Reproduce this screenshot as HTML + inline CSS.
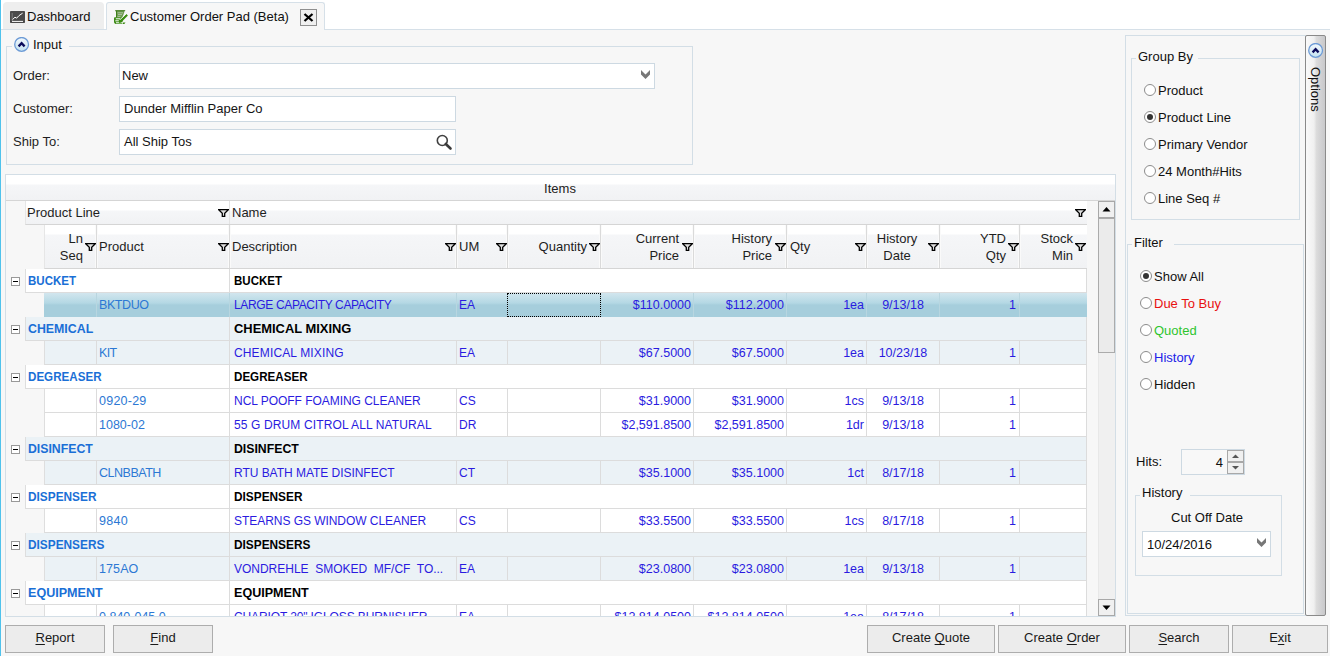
<!DOCTYPE html><html><head><meta charset="utf-8"><style>
*{margin:0;padding:0;box-sizing:border-box}
html,body{width:1330px;height:656px;overflow:hidden;background:#f7f7f7;font-family:"Liberation Sans",sans-serif;font-size:13px;color:#1e1e1e}
.abs{position:absolute}
.t{position:absolute;white-space:nowrap;line-height:15px}
.box{position:absolute;border:1px solid #d3dee6}
.btn{position:absolute;border:1px solid #adadad;background:#ececec;text-align:center;line-height:24px;font-size:13px;color:#1a1a1a}
.btn u{text-decoration:underline;text-underline-offset:2px}
.hdr{position:absolute;background:linear-gradient(#ffffff 0,#ffffff 9px,#f5f6f8 10px,#f1f2f4 100%)}
.vl{position:absolute;width:1px}
.hl{position:absolute;height:1px}
.radio{position:absolute;width:12px;height:12px;border-radius:50%;border:1px solid #8c8c8c;background:#fff}
.radio.on::after{content:"";position:absolute;left:2px;top:2px;width:6px;height:6px;border-radius:50%;background:#333}
.g{font-size:12px;letter-spacing:-0.3px}
</style></head><body>

<div class="abs" style="left:0px;top:0px;width:1330px;height:29px;background:#fff"></div>
<div class="abs" style="left:0px;top:29px;width:1330px;height:1px;background:#d6e0e8"></div>
<div class="abs" style="left:3px;top:2px;width:101px;height:27px;background:#eeeeee;border-radius:4px 4px 0 0"></div>
<svg class="abs" style="left:10px;top:11px" width="15" height="12" viewBox="0 0 15 12">
<rect x="0" y="0" width="15" height="12" rx="0.8" fill="#4a4a4a"/>
<path d="M2.2 2v8" stroke="#8a8a8a" stroke-width="0.8"/>
<polyline points="2.5,8.6 5,6.2 6.6,7.2 9,4.6 12.6,2.2" stroke="#fff" stroke-width="1" fill="none"/>
<line x1="2" y1="10.4" x2="13" y2="10.4" stroke="#fff" stroke-width="1"/></svg>
<div class="t" style="left:27px;top:9px;color:#101010">Dashboard</div>
<div class="abs" style="left:106px;top:2px;width:219px;height:28px;background:#f7f7f7;border:1px solid #d6e0e8;border-bottom:none;border-radius:3px 3px 0 0"></div>
<svg class="abs" style="left:112px;top:8px" width="18" height="18" viewBox="0 0 18 18">
<path d="M3 2h10.5L12 4H4z" fill="#578a38"/>
<path d="M4 3.5h8.5l-2 6H4.3z" fill="#6e9a52"/>
<path d="M5.5 4.8h5.5M6 6.6h4M5.5 8.4h3" stroke="#b4c8a6" stroke-width="0.9"/>
<path d="M4.5 3v6.5" stroke="#3f7f1a" stroke-width="1"/>
<path d="M3.2 9.3h7.3v6.7H4c-1.3 0-2-1-2-2.2v-3.2c0-.8.5-1.3 1.2-1.3z" fill="#3c8a14"/>
<path d="M3.8 10.8h4.5M3.3 12.8h3.5M4 14.8h7.5" stroke="#ffffff" stroke-width="1"/>
<path d="M11 14.5h2.5l-1.2 1.5H11z" fill="#3c8a14"/>
<path d="M7.5 12.8L14.3 6l1.6 1.6-6.8 6.8-2.2.6z" fill="#3a8c10"/>
<path d="M8 11.8l6-6" stroke="#ffffff" stroke-width="0.9"/>
</svg>
<div class="t" style="left:130px;top:9px;color:#101010">Customer Order Pad (Beta)</div>
<div class="abs" style="left:300px;top:9px;width:17px;height:17px;background:#f0f0f0;border:1px solid #8f8f8f"></div>
<svg class="abs" style="left:303px;top:13px" width="11" height="9" viewBox="0 0 11 9"><path d="M1.5 1L9.5 8M9.5 1L1.5 8" stroke="#000" stroke-width="2.3"/></svg>
<div class="abs" style="left:0px;top:0px;width:1px;height:656px;background:#4fc2ec"></div>
<div class="abs" style="left:6px;top:46px;width:687px;height:119px;border:1px solid #d3dee6"></div>
<div class="abs" style="left:12px;top:38px;width:57px;height:14px;background:#f7f7f7"></div>
<svg class="abs" style="left:14px;top:37px" width="16" height="16" viewBox="0 0 16 16">
<defs><linearGradient id="eg1" x1="0" y1="0" x2="0" y2="1"><stop offset="0" stop-color="#f4fafd"/><stop offset="0.5" stop-color="#dcecf6"/><stop offset="1" stop-color="#c4e4f2"/></linearGradient></defs>
<circle cx="7.6" cy="7.4" r="6.9" fill="url(#eg1)" stroke="#6d9bd6" stroke-width="1.3"/>
<path d="M4.6 9.4L7.6 6.2l3 3.2" stroke="#0a0a5a" stroke-width="2.3" fill="none"/></svg>
<div class="t" style="left:33px;top:37px;color:#101010">Input</div>
<div class="t" style="left:13px;top:68px;">Order:</div>
<div class="t" style="left:13px;top:101px;">Customer:</div>
<div class="t" style="left:13px;top:134px;">Ship To:</div>
<div class="abs" style="left:119px;top:63px;width:536px;height:26px;background:#fff;border:1px solid #cdd9e2"></div>
<div class="t" style="left:122px;top:68px;color:#141414">New</div>
<svg class="abs" style="left:641px;top:70px" width="9" height="9" viewBox="0 0 9 9"><path d="M0 0L4.5 4.4L9 0V4.5L4.5 9L0 4.5Z" fill="#777777"/></svg>
<div class="abs" style="left:119px;top:96px;width:337px;height:26px;background:#fff;border:1px solid #cdd9e2"></div>
<div class="t" style="left:124px;top:101px;color:#141414">Dunder Mifflin Paper Co</div>
<div class="abs" style="left:119px;top:129px;width:337px;height:26px;background:#fff;border:1px solid #cdd9e2"></div>
<div class="t" style="left:124px;top:134px;color:#141414">All Ship Tos</div>
<svg class="abs" style="left:435px;top:133px" width="18" height="18" viewBox="0 0 18 18"><circle cx="7.3" cy="7.5" r="5" stroke="#404040" stroke-width="1.6" fill="none"/><path d="M10.8 11L15.5 15.5" stroke="#3a3a3a" stroke-width="2.6" stroke-linecap="round"/></svg>
<div class="abs" style="left:5px;top:174px;width:1111px;height:443px;border:1px solid #d3dee6;background:#f7f7f7"></div>
<div class="hdr" style="left:6px;top:175px;width:1109px;height:26px;border-bottom:1px solid #d5d5d5"></div>
<div class="t" style="left:410px;top:181px;width:300px;text-align:center;color:#222">Items</div>
<div class="hdr" style="left:25px;top:201px;width:1062px;height:24px;border-bottom:1px solid #d5d5d5;border-left:1px solid #e6e6e6"></div>
<div class="abs" style="left:229px;top:201px;width:1px;height:23px;background:#e3e3e3"></div>
<div class="t" style="left:27px;top:205px;">Product Line</div>
<svg class="abs" style="left:218px;top:209px" width="11" height="8" viewBox="0 0 11 8"><path d="M0.7 0.7H10.3L6.7 4.3V7.3H4.3V4.3Z" fill="#dedede" stroke="#000" stroke-width="1.3" stroke-linejoin="miter"/></svg>
<div class="t" style="left:232px;top:205px;">Name</div>
<svg class="abs" style="left:1075px;top:209px" width="11" height="8" viewBox="0 0 11 8"><path d="M0.7 0.7H10.3L6.7 4.3V7.3H4.3V4.3Z" fill="#dedede" stroke="#000" stroke-width="1.3" stroke-linejoin="miter"/></svg>
<div class="hdr" style="left:44px;top:225px;width:1043px;height:44px;border-bottom:1px solid #d5d5d5;border-left:1px solid #e6e6e6;background:linear-gradient(#fff 0,#fff 9px,#f5f6f8 10px,#f1f2f4 100%)"></div>
<div class="abs" style="left:95px;top:225px;width:1px;height:43px;background:#fafafa"></div>
<div class="abs" style="left:96px;top:225px;width:1px;height:43px;background:#dadada"></div>
<div class="abs" style="left:97px;top:225px;width:1px;height:43px;background:#fafafa"></div>
<div class="abs" style="left:228px;top:225px;width:1px;height:43px;background:#fafafa"></div>
<div class="abs" style="left:229px;top:225px;width:1px;height:43px;background:#dadada"></div>
<div class="abs" style="left:230px;top:225px;width:1px;height:43px;background:#fafafa"></div>
<div class="abs" style="left:455px;top:225px;width:1px;height:43px;background:#fafafa"></div>
<div class="abs" style="left:456px;top:225px;width:1px;height:43px;background:#dadada"></div>
<div class="abs" style="left:457px;top:225px;width:1px;height:43px;background:#fafafa"></div>
<div class="abs" style="left:506px;top:225px;width:1px;height:43px;background:#fafafa"></div>
<div class="abs" style="left:507px;top:225px;width:1px;height:43px;background:#dadada"></div>
<div class="abs" style="left:508px;top:225px;width:1px;height:43px;background:#fafafa"></div>
<div class="abs" style="left:599px;top:225px;width:1px;height:43px;background:#fafafa"></div>
<div class="abs" style="left:600px;top:225px;width:1px;height:43px;background:#dadada"></div>
<div class="abs" style="left:601px;top:225px;width:1px;height:43px;background:#fafafa"></div>
<div class="abs" style="left:692px;top:225px;width:1px;height:43px;background:#fafafa"></div>
<div class="abs" style="left:693px;top:225px;width:1px;height:43px;background:#dadada"></div>
<div class="abs" style="left:694px;top:225px;width:1px;height:43px;background:#fafafa"></div>
<div class="abs" style="left:785px;top:225px;width:1px;height:43px;background:#fafafa"></div>
<div class="abs" style="left:786px;top:225px;width:1px;height:43px;background:#dadada"></div>
<div class="abs" style="left:787px;top:225px;width:1px;height:43px;background:#fafafa"></div>
<div class="abs" style="left:865px;top:225px;width:1px;height:43px;background:#fafafa"></div>
<div class="abs" style="left:866px;top:225px;width:1px;height:43px;background:#dadada"></div>
<div class="abs" style="left:867px;top:225px;width:1px;height:43px;background:#fafafa"></div>
<div class="abs" style="left:938px;top:225px;width:1px;height:43px;background:#fafafa"></div>
<div class="abs" style="left:939px;top:225px;width:1px;height:43px;background:#dadada"></div>
<div class="abs" style="left:940px;top:225px;width:1px;height:43px;background:#fafafa"></div>
<div class="abs" style="left:1018px;top:225px;width:1px;height:43px;background:#fafafa"></div>
<div class="abs" style="left:1019px;top:225px;width:1px;height:43px;background:#dadada"></div>
<div class="abs" style="left:1020px;top:225px;width:1px;height:43px;background:#fafafa"></div>
<div class="t" style="left:-117px;top:230px;width:200px;text-align:right;line-height:17px">Ln<br>Seq</div>
<svg class="abs" style="left:85px;top:243px" width="11" height="8" viewBox="0 0 11 8"><path d="M0.7 0.7H10.3L6.7 4.3V7.3H4.3V4.3Z" fill="#dedede" stroke="#000" stroke-width="1.3" stroke-linejoin="miter"/></svg>
<div class="t" style="left:99px;top:239px;">Product</div>
<svg class="abs" style="left:218px;top:243px" width="11" height="8" viewBox="0 0 11 8"><path d="M0.7 0.7H10.3L6.7 4.3V7.3H4.3V4.3Z" fill="#dedede" stroke="#000" stroke-width="1.3" stroke-linejoin="miter"/></svg>
<div class="t" style="left:232px;top:239px;">Description</div>
<svg class="abs" style="left:445px;top:243px" width="11" height="8" viewBox="0 0 11 8"><path d="M0.7 0.7H10.3L6.7 4.3V7.3H4.3V4.3Z" fill="#dedede" stroke="#000" stroke-width="1.3" stroke-linejoin="miter"/></svg>
<div class="t" style="left:459px;top:239px;">UM</div>
<svg class="abs" style="left:496px;top:243px" width="11" height="8" viewBox="0 0 11 8"><path d="M0.7 0.7H10.3L6.7 4.3V7.3H4.3V4.3Z" fill="#dedede" stroke="#000" stroke-width="1.3" stroke-linejoin="miter"/></svg>
<div class="t" style="left:287px;top:239px;width:300px;text-align:right;">Quantity</div>
<svg class="abs" style="left:589px;top:243px" width="11" height="8" viewBox="0 0 11 8"><path d="M0.7 0.7H10.3L6.7 4.3V7.3H4.3V4.3Z" fill="#dedede" stroke="#000" stroke-width="1.3" stroke-linejoin="miter"/></svg>
<div class="t" style="left:479px;top:230px;width:200px;text-align:right;line-height:17px">Current<br>Price</div>
<svg class="abs" style="left:682px;top:243px" width="11" height="8" viewBox="0 0 11 8"><path d="M0.7 0.7H10.3L6.7 4.3V7.3H4.3V4.3Z" fill="#dedede" stroke="#000" stroke-width="1.3" stroke-linejoin="miter"/></svg>
<div class="t" style="left:572px;top:230px;width:200px;text-align:right;line-height:17px">History<br>Price</div>
<svg class="abs" style="left:775px;top:243px" width="11" height="8" viewBox="0 0 11 8"><path d="M0.7 0.7H10.3L6.7 4.3V7.3H4.3V4.3Z" fill="#dedede" stroke="#000" stroke-width="1.3" stroke-linejoin="miter"/></svg>
<div class="t" style="left:790px;top:239px;">Qty</div>
<svg class="abs" style="left:855px;top:243px" width="11" height="8" viewBox="0 0 11 8"><path d="M0.7 0.7H10.3L6.7 4.3V7.3H4.3V4.3Z" fill="#dedede" stroke="#000" stroke-width="1.3" stroke-linejoin="miter"/></svg>
<div class="t" style="left:797px;top:230px;width:200px;text-align:center;line-height:17px">History<br>Date</div>
<svg class="abs" style="left:928px;top:243px" width="11" height="8" viewBox="0 0 11 8"><path d="M0.7 0.7H10.3L6.7 4.3V7.3H4.3V4.3Z" fill="#dedede" stroke="#000" stroke-width="1.3" stroke-linejoin="miter"/></svg>
<div class="t" style="left:806px;top:230px;width:200px;text-align:right;line-height:17px">YTD<br>Qty</div>
<svg class="abs" style="left:1008px;top:243px" width="11" height="8" viewBox="0 0 11 8"><path d="M0.7 0.7H10.3L6.7 4.3V7.3H4.3V4.3Z" fill="#dedede" stroke="#000" stroke-width="1.3" stroke-linejoin="miter"/></svg>
<div class="t" style="left:873px;top:230px;width:200px;text-align:right;line-height:17px">Stock<br>Min</div>
<svg class="abs" style="left:1075px;top:243px" width="11" height="8" viewBox="0 0 11 8"><path d="M0.7 0.7H10.3L6.7 4.3V7.3H4.3V4.3Z" fill="#dedede" stroke="#000" stroke-width="1.3" stroke-linejoin="miter"/></svg>
<div class="abs" style="left:1098px;top:201px;width:17px;height:415px;background:#f0f0f0;border-left:1px solid #e8e8e8"></div>
<div class="abs" style="left:1098px;top:201px;width:17px;height:17px;background:#f0f0f0;border:1px solid #a8a8a8"></div>
<svg class="abs" style="left:1102px;top:206px" width="9" height="6" viewBox="0 0 9 6"><path d="M0.5 5.5L4.5 1l4 4.5z" fill="#000"/></svg>
<div class="abs" style="left:1098px;top:218px;width:17px;height:135px;background:#ebebeb;border:1px solid #ababab"></div>
<div class="abs" style="left:1098px;top:599px;width:17px;height:17px;background:#f0f0f0;border:1px solid #a8a8a8"></div>
<svg class="abs" style="left:1102px;top:605px" width="9" height="6" viewBox="0 0 9 6"><path d="M0.5 0.5L4.5 5l4-4.5z" fill="#000"/></svg>
<div class="abs" style="left:6px;top:269px;width:1092px;height:347px;overflow:hidden">
<div class="abs" style="left:19px;top:0px;width:1062px;height:24px;background:#ffffff;border-left:1px solid #dedede;border-bottom:1px solid #dcdcdc;border-right:1px solid #dcdcdc"></div>
<div class="abs" style="left:223px;top:0px;width:1px;height:23px;background:#dcdcdc"></div>
<div class="abs" style="left:5px;top:8px;width:9px;height:9px;background:#fff;border:1px solid #999"></div>
<div class="abs" style="left:7px;top:12px;width:5px;height:1px;background:#000"></div>
<div class="t" style="left:22px;top:4px;font-size:13.6px;font-weight:bold;color:#1a6fd6;transform-origin:0 0;transform:scaleX(0.8478)">BUCKET</div>
<div class="t" style="left:228px;top:4px;font-size:13.6px;font-weight:bold;color:#000;transform-origin:0 0;transform:scaleX(0.8478)">BUCKET</div>
<div class="abs" style="left:38px;top:24px;width:1043px;height:24px;background:linear-gradient(#d2e6ee 0,#b4d8e4 10px,#a6cedc 12px,#a6cedc 100%)"></div>
<div class="abs" style="left:90px;top:24px;width:1px;height:24px;background:#b8d6e0"></div>
<div class="abs" style="left:223px;top:24px;width:1px;height:24px;background:#b8d6e0"></div>
<div class="abs" style="left:450px;top:24px;width:1px;height:24px;background:#b8d6e0"></div>
<div class="abs" style="left:501px;top:24px;width:1px;height:24px;background:#b8d6e0"></div>
<div class="abs" style="left:594px;top:24px;width:1px;height:24px;background:#b8d6e0"></div>
<div class="abs" style="left:687px;top:24px;width:1px;height:24px;background:#b8d6e0"></div>
<div class="abs" style="left:780px;top:24px;width:1px;height:24px;background:#b8d6e0"></div>
<div class="abs" style="left:860px;top:24px;width:1px;height:24px;background:#b8d6e0"></div>
<div class="abs" style="left:933px;top:24px;width:1px;height:24px;background:#b8d6e0"></div>
<div class="abs" style="left:1013px;top:24px;width:1px;height:24px;background:#b8d6e0"></div>
<div class="t" style="left:93px;top:29px;font-size:12.5px;color:#2c78d4;letter-spacing:-0.417px">BKTDUO</div>
<div class="t" style="left:228px;top:29px;font-size:12px;letter-spacing:-0.345px;color:#2a1be0">LARGE CAPACITY CAPACITY</div>
<div class="t" style="left:453px;top:29px;font-size:12px;color:#2a1be0">EA</div>
<div class="t" style="left:385px;top:29px;width:300px;text-align:right;font-size:12.5px;color:#2a1be0">$110.0000</div>
<div class="t" style="left:478px;top:29px;width:300px;text-align:right;font-size:12.5px;color:#2a1be0">$112.2000</div>
<div class="t" style="left:558px;top:29px;width:300px;text-align:right;font-size:12.5px;color:#2a1be0">1ea</div>
<div class="t" style="left:747px;top:29px;width:300px;text-align:center;font-size:12.5px;color:#2a1be0">9/13/18</div>
<div class="t" style="left:710px;top:29px;width:300px;text-align:right;font-size:12.5px;color:#2a1be0">1</div>
<div class="abs" style="left:501px;top:24px;width:94px;height:24px;border:1px dotted #000"></div>
<div class="abs" style="left:19px;top:48px;width:1062px;height:24px;background:#ebf2f6;border-left:1px solid #dedede;border-bottom:1px solid #dcdcdc;border-right:1px solid #dcdcdc"></div>
<div class="abs" style="left:223px;top:48px;width:1px;height:23px;background:#dcdcdc"></div>
<div class="abs" style="left:5px;top:56px;width:9px;height:9px;background:#fff;border:1px solid #999"></div>
<div class="abs" style="left:7px;top:60px;width:5px;height:1px;background:#000"></div>
<div class="t" style="left:22px;top:52px;font-size:13.6px;font-weight:bold;color:#1a6fd6;transform-origin:0 0;transform:scaleX(0.9087)">CHEMICAL</div>
<div class="t" style="left:228px;top:52px;font-size:13.6px;font-weight:bold;color:#000;transform-origin:0 0;transform:scaleX(0.9499)">CHEMICAL MIXING</div>
<div class="abs" style="left:38px;top:72px;width:1043px;height:24px;background:#ebf2f6;border-bottom:1px solid #dcdcdc;border-left:1px solid #dedede;border-right:1px solid #dcdcdc"></div>
<div class="abs" style="left:90px;top:72px;width:1px;height:23px;background:#dcdcdc"></div>
<div class="abs" style="left:223px;top:72px;width:1px;height:23px;background:#dcdcdc"></div>
<div class="abs" style="left:450px;top:72px;width:1px;height:23px;background:#dcdcdc"></div>
<div class="abs" style="left:501px;top:72px;width:1px;height:23px;background:#dcdcdc"></div>
<div class="abs" style="left:594px;top:72px;width:1px;height:23px;background:#dcdcdc"></div>
<div class="abs" style="left:687px;top:72px;width:1px;height:23px;background:#dcdcdc"></div>
<div class="abs" style="left:780px;top:72px;width:1px;height:23px;background:#dcdcdc"></div>
<div class="abs" style="left:860px;top:72px;width:1px;height:23px;background:#dcdcdc"></div>
<div class="abs" style="left:933px;top:72px;width:1px;height:23px;background:#dcdcdc"></div>
<div class="abs" style="left:1013px;top:72px;width:1px;height:23px;background:#dcdcdc"></div>
<div class="t" style="left:93px;top:77px;font-size:12.5px;color:#2c78d4;letter-spacing:-0.673px">KIT</div>
<div class="t" style="left:228px;top:77px;font-size:12px;letter-spacing:0.142px;color:#2a1be0">CHEMICAL MIXING</div>
<div class="t" style="left:453px;top:77px;font-size:12px;color:#2a1be0">EA</div>
<div class="t" style="left:385px;top:77px;width:300px;text-align:right;font-size:12.5px;color:#2a1be0">$67.5000</div>
<div class="t" style="left:478px;top:77px;width:300px;text-align:right;font-size:12.5px;color:#2a1be0">$67.5000</div>
<div class="t" style="left:558px;top:77px;width:300px;text-align:right;font-size:12.5px;color:#2a1be0">1ea</div>
<div class="t" style="left:747px;top:77px;width:300px;text-align:center;font-size:12.5px;color:#2a1be0">10/23/18</div>
<div class="t" style="left:710px;top:77px;width:300px;text-align:right;font-size:12.5px;color:#2a1be0">1</div>
<div class="abs" style="left:19px;top:96px;width:1062px;height:24px;background:#ffffff;border-left:1px solid #dedede;border-bottom:1px solid #dcdcdc;border-right:1px solid #dcdcdc"></div>
<div class="abs" style="left:223px;top:96px;width:1px;height:23px;background:#dcdcdc"></div>
<div class="abs" style="left:5px;top:104px;width:9px;height:9px;background:#fff;border:1px solid #999"></div>
<div class="abs" style="left:7px;top:108px;width:5px;height:1px;background:#000"></div>
<div class="t" style="left:22px;top:100px;font-size:13.6px;font-weight:bold;color:#1a6fd6;transform-origin:0 0;transform:scaleX(0.8539)">DEGREASER</div>
<div class="t" style="left:228px;top:100px;font-size:13.6px;font-weight:bold;color:#000;transform-origin:0 0;transform:scaleX(0.8539)">DEGREASER</div>
<div class="abs" style="left:38px;top:120px;width:1043px;height:24px;background:#ffffff;border-bottom:1px solid #dcdcdc;border-left:1px solid #dedede;border-right:1px solid #dcdcdc"></div>
<div class="abs" style="left:90px;top:120px;width:1px;height:23px;background:#dcdcdc"></div>
<div class="abs" style="left:223px;top:120px;width:1px;height:23px;background:#dcdcdc"></div>
<div class="abs" style="left:450px;top:120px;width:1px;height:23px;background:#dcdcdc"></div>
<div class="abs" style="left:501px;top:120px;width:1px;height:23px;background:#dcdcdc"></div>
<div class="abs" style="left:594px;top:120px;width:1px;height:23px;background:#dcdcdc"></div>
<div class="abs" style="left:687px;top:120px;width:1px;height:23px;background:#dcdcdc"></div>
<div class="abs" style="left:780px;top:120px;width:1px;height:23px;background:#dcdcdc"></div>
<div class="abs" style="left:860px;top:120px;width:1px;height:23px;background:#dcdcdc"></div>
<div class="abs" style="left:933px;top:120px;width:1px;height:23px;background:#dcdcdc"></div>
<div class="abs" style="left:1013px;top:120px;width:1px;height:23px;background:#dcdcdc"></div>
<div class="t" style="left:93px;top:125px;font-size:12.5px;color:#2c78d4;letter-spacing:0.238px">0920-29</div>
<div class="t" style="left:228px;top:125px;font-size:12px;letter-spacing:-0.038px;color:#2a1be0">NCL POOFF FOAMING CLEANER</div>
<div class="t" style="left:453px;top:125px;font-size:12px;color:#2a1be0">CS</div>
<div class="t" style="left:385px;top:125px;width:300px;text-align:right;font-size:12.5px;color:#2a1be0">$31.9000</div>
<div class="t" style="left:478px;top:125px;width:300px;text-align:right;font-size:12.5px;color:#2a1be0">$31.9000</div>
<div class="t" style="left:558px;top:125px;width:300px;text-align:right;font-size:12.5px;color:#2a1be0">1cs</div>
<div class="t" style="left:747px;top:125px;width:300px;text-align:center;font-size:12.5px;color:#2a1be0">9/13/18</div>
<div class="t" style="left:710px;top:125px;width:300px;text-align:right;font-size:12.5px;color:#2a1be0">1</div>
<div class="abs" style="left:38px;top:144px;width:1043px;height:24px;background:#ffffff;border-bottom:1px solid #dcdcdc;border-left:1px solid #dedede;border-right:1px solid #dcdcdc"></div>
<div class="abs" style="left:90px;top:144px;width:1px;height:23px;background:#dcdcdc"></div>
<div class="abs" style="left:223px;top:144px;width:1px;height:23px;background:#dcdcdc"></div>
<div class="abs" style="left:450px;top:144px;width:1px;height:23px;background:#dcdcdc"></div>
<div class="abs" style="left:501px;top:144px;width:1px;height:23px;background:#dcdcdc"></div>
<div class="abs" style="left:594px;top:144px;width:1px;height:23px;background:#dcdcdc"></div>
<div class="abs" style="left:687px;top:144px;width:1px;height:23px;background:#dcdcdc"></div>
<div class="abs" style="left:780px;top:144px;width:1px;height:23px;background:#dcdcdc"></div>
<div class="abs" style="left:860px;top:144px;width:1px;height:23px;background:#dcdcdc"></div>
<div class="abs" style="left:933px;top:144px;width:1px;height:23px;background:#dcdcdc"></div>
<div class="abs" style="left:1013px;top:144px;width:1px;height:23px;background:#dcdcdc"></div>
<div class="t" style="left:93px;top:149px;font-size:12.5px;color:#2c78d4;letter-spacing:0px">1080-02</div>
<div class="t" style="left:228px;top:149px;font-size:12px;letter-spacing:0.125px;color:#2a1be0">55 G DRUM CITROL ALL NATURAL</div>
<div class="t" style="left:453px;top:149px;font-size:12px;color:#2a1be0">DR</div>
<div class="t" style="left:385px;top:149px;width:300px;text-align:right;font-size:12.5px;color:#2a1be0">$2,591.8500</div>
<div class="t" style="left:478px;top:149px;width:300px;text-align:right;font-size:12.5px;color:#2a1be0">$2,591.8500</div>
<div class="t" style="left:558px;top:149px;width:300px;text-align:right;font-size:12.5px;color:#2a1be0">1dr</div>
<div class="t" style="left:747px;top:149px;width:300px;text-align:center;font-size:12.5px;color:#2a1be0">9/13/18</div>
<div class="t" style="left:710px;top:149px;width:300px;text-align:right;font-size:12.5px;color:#2a1be0">1</div>
<div class="abs" style="left:19px;top:168px;width:1062px;height:24px;background:#ebf2f6;border-left:1px solid #dedede;border-bottom:1px solid #dcdcdc;border-right:1px solid #dcdcdc"></div>
<div class="abs" style="left:223px;top:168px;width:1px;height:23px;background:#dcdcdc"></div>
<div class="abs" style="left:5px;top:176px;width:9px;height:9px;background:#fff;border:1px solid #999"></div>
<div class="abs" style="left:7px;top:180px;width:5px;height:1px;background:#000"></div>
<div class="t" style="left:22px;top:172px;font-size:13.6px;font-weight:bold;color:#1a6fd6;transform-origin:0 0;transform:scaleX(0.903)">DISINFECT</div>
<div class="t" style="left:228px;top:172px;font-size:13.6px;font-weight:bold;color:#000;transform-origin:0 0;transform:scaleX(0.903)">DISINFECT</div>
<div class="abs" style="left:38px;top:192px;width:1043px;height:24px;background:#ebf2f6;border-bottom:1px solid #dcdcdc;border-left:1px solid #dedede;border-right:1px solid #dcdcdc"></div>
<div class="abs" style="left:90px;top:192px;width:1px;height:23px;background:#dcdcdc"></div>
<div class="abs" style="left:223px;top:192px;width:1px;height:23px;background:#dcdcdc"></div>
<div class="abs" style="left:450px;top:192px;width:1px;height:23px;background:#dcdcdc"></div>
<div class="abs" style="left:501px;top:192px;width:1px;height:23px;background:#dcdcdc"></div>
<div class="abs" style="left:594px;top:192px;width:1px;height:23px;background:#dcdcdc"></div>
<div class="abs" style="left:687px;top:192px;width:1px;height:23px;background:#dcdcdc"></div>
<div class="abs" style="left:780px;top:192px;width:1px;height:23px;background:#dcdcdc"></div>
<div class="abs" style="left:860px;top:192px;width:1px;height:23px;background:#dcdcdc"></div>
<div class="abs" style="left:933px;top:192px;width:1px;height:23px;background:#dcdcdc"></div>
<div class="abs" style="left:1013px;top:192px;width:1px;height:23px;background:#dcdcdc"></div>
<div class="t" style="left:93px;top:197px;font-size:12.5px;color:#2c78d4;letter-spacing:-0.479px">CLNBBATH</div>
<div class="t" style="left:228px;top:197px;font-size:12px;letter-spacing:-0.034px;color:#2a1be0">RTU BATH MATE DISINFECT</div>
<div class="t" style="left:453px;top:197px;font-size:12px;color:#2a1be0">CT</div>
<div class="t" style="left:385px;top:197px;width:300px;text-align:right;font-size:12.5px;color:#2a1be0">$35.1000</div>
<div class="t" style="left:478px;top:197px;width:300px;text-align:right;font-size:12.5px;color:#2a1be0">$35.1000</div>
<div class="t" style="left:558px;top:197px;width:300px;text-align:right;font-size:12.5px;color:#2a1be0">1ct</div>
<div class="t" style="left:747px;top:197px;width:300px;text-align:center;font-size:12.5px;color:#2a1be0">8/17/18</div>
<div class="t" style="left:710px;top:197px;width:300px;text-align:right;font-size:12.5px;color:#2a1be0">1</div>
<div class="abs" style="left:19px;top:216px;width:1062px;height:24px;background:#ffffff;border-left:1px solid #dedede;border-bottom:1px solid #dcdcdc;border-right:1px solid #dcdcdc"></div>
<div class="abs" style="left:223px;top:216px;width:1px;height:23px;background:#dcdcdc"></div>
<div class="abs" style="left:5px;top:224px;width:9px;height:9px;background:#fff;border:1px solid #999"></div>
<div class="abs" style="left:7px;top:228px;width:5px;height:1px;background:#000"></div>
<div class="t" style="left:22px;top:220px;font-size:13.6px;font-weight:bold;color:#1a6fd6;transform-origin:0 0;transform:scaleX(0.8712)">DISPENSER</div>
<div class="t" style="left:228px;top:220px;font-size:13.6px;font-weight:bold;color:#000;transform-origin:0 0;transform:scaleX(0.8712)">DISPENSER</div>
<div class="abs" style="left:38px;top:240px;width:1043px;height:24px;background:#ffffff;border-bottom:1px solid #dcdcdc;border-left:1px solid #dedede;border-right:1px solid #dcdcdc"></div>
<div class="abs" style="left:90px;top:240px;width:1px;height:23px;background:#dcdcdc"></div>
<div class="abs" style="left:223px;top:240px;width:1px;height:23px;background:#dcdcdc"></div>
<div class="abs" style="left:450px;top:240px;width:1px;height:23px;background:#dcdcdc"></div>
<div class="abs" style="left:501px;top:240px;width:1px;height:23px;background:#dcdcdc"></div>
<div class="abs" style="left:594px;top:240px;width:1px;height:23px;background:#dcdcdc"></div>
<div class="abs" style="left:687px;top:240px;width:1px;height:23px;background:#dcdcdc"></div>
<div class="abs" style="left:780px;top:240px;width:1px;height:23px;background:#dcdcdc"></div>
<div class="abs" style="left:860px;top:240px;width:1px;height:23px;background:#dcdcdc"></div>
<div class="abs" style="left:933px;top:240px;width:1px;height:23px;background:#dcdcdc"></div>
<div class="abs" style="left:1013px;top:240px;width:1px;height:23px;background:#dcdcdc"></div>
<div class="t" style="left:93px;top:245px;font-size:12.5px;color:#2c78d4;letter-spacing:0.264px">9840</div>
<div class="t" style="left:228px;top:245px;font-size:12px;letter-spacing:-0.048px;color:#2a1be0">STEARNS GS WINDOW CLEANER</div>
<div class="t" style="left:453px;top:245px;font-size:12px;color:#2a1be0">CS</div>
<div class="t" style="left:385px;top:245px;width:300px;text-align:right;font-size:12.5px;color:#2a1be0">$33.5500</div>
<div class="t" style="left:478px;top:245px;width:300px;text-align:right;font-size:12.5px;color:#2a1be0">$33.5500</div>
<div class="t" style="left:558px;top:245px;width:300px;text-align:right;font-size:12.5px;color:#2a1be0">1cs</div>
<div class="t" style="left:747px;top:245px;width:300px;text-align:center;font-size:12.5px;color:#2a1be0">8/17/18</div>
<div class="t" style="left:710px;top:245px;width:300px;text-align:right;font-size:12.5px;color:#2a1be0">1</div>
<div class="abs" style="left:19px;top:264px;width:1062px;height:24px;background:#ebf2f6;border-left:1px solid #dedede;border-bottom:1px solid #dcdcdc;border-right:1px solid #dcdcdc"></div>
<div class="abs" style="left:223px;top:264px;width:1px;height:23px;background:#dcdcdc"></div>
<div class="abs" style="left:5px;top:272px;width:9px;height:9px;background:#fff;border:1px solid #999"></div>
<div class="abs" style="left:7px;top:276px;width:5px;height:1px;background:#000"></div>
<div class="t" style="left:22px;top:268px;font-size:13.6px;font-weight:bold;color:#1a6fd6;transform-origin:0 0;transform:scaleX(0.8712)">DISPENSERS</div>
<div class="t" style="left:228px;top:268px;font-size:13.6px;font-weight:bold;color:#000;transform-origin:0 0;transform:scaleX(0.8712)">DISPENSERS</div>
<div class="abs" style="left:38px;top:288px;width:1043px;height:24px;background:#ebf2f6;border-bottom:1px solid #dcdcdc;border-left:1px solid #dedede;border-right:1px solid #dcdcdc"></div>
<div class="abs" style="left:90px;top:288px;width:1px;height:23px;background:#dcdcdc"></div>
<div class="abs" style="left:223px;top:288px;width:1px;height:23px;background:#dcdcdc"></div>
<div class="abs" style="left:450px;top:288px;width:1px;height:23px;background:#dcdcdc"></div>
<div class="abs" style="left:501px;top:288px;width:1px;height:23px;background:#dcdcdc"></div>
<div class="abs" style="left:594px;top:288px;width:1px;height:23px;background:#dcdcdc"></div>
<div class="abs" style="left:687px;top:288px;width:1px;height:23px;background:#dcdcdc"></div>
<div class="abs" style="left:780px;top:288px;width:1px;height:23px;background:#dcdcdc"></div>
<div class="abs" style="left:860px;top:288px;width:1px;height:23px;background:#dcdcdc"></div>
<div class="abs" style="left:933px;top:288px;width:1px;height:23px;background:#dcdcdc"></div>
<div class="abs" style="left:1013px;top:288px;width:1px;height:23px;background:#dcdcdc"></div>
<div class="t" style="left:93px;top:293px;font-size:12.5px;color:#2c78d4;letter-spacing:0.096px">175AO</div>
<div class="t" style="left:228px;top:293px;font-size:12px;letter-spacing:-0.013px;color:#2a1be0">VONDREHLE&nbsp; SMOKED&nbsp; MF/CF&nbsp; TO...</div>
<div class="t" style="left:453px;top:293px;font-size:12px;color:#2a1be0">EA</div>
<div class="t" style="left:385px;top:293px;width:300px;text-align:right;font-size:12.5px;color:#2a1be0">$23.0800</div>
<div class="t" style="left:478px;top:293px;width:300px;text-align:right;font-size:12.5px;color:#2a1be0">$23.0800</div>
<div class="t" style="left:558px;top:293px;width:300px;text-align:right;font-size:12.5px;color:#2a1be0">1ea</div>
<div class="t" style="left:747px;top:293px;width:300px;text-align:center;font-size:12.5px;color:#2a1be0">9/13/18</div>
<div class="t" style="left:710px;top:293px;width:300px;text-align:right;font-size:12.5px;color:#2a1be0">1</div>
<div class="abs" style="left:19px;top:312px;width:1062px;height:24px;background:#ffffff;border-left:1px solid #dedede;border-bottom:1px solid #dcdcdc;border-right:1px solid #dcdcdc"></div>
<div class="abs" style="left:223px;top:312px;width:1px;height:23px;background:#dcdcdc"></div>
<div class="abs" style="left:5px;top:320px;width:9px;height:9px;background:#fff;border:1px solid #999"></div>
<div class="abs" style="left:7px;top:324px;width:5px;height:1px;background:#000"></div>
<div class="t" style="left:22px;top:316px;font-size:13.6px;font-weight:bold;color:#1a6fd6;transform-origin:0 0;transform:scaleX(0.9245)">EQUIPMENT</div>
<div class="t" style="left:228px;top:316px;font-size:13.6px;font-weight:bold;color:#000;transform-origin:0 0;transform:scaleX(0.9245)">EQUIPMENT</div>
<div class="abs" style="left:38px;top:336px;width:1043px;height:24px;background:#ffffff;border-bottom:1px solid #dcdcdc;border-left:1px solid #dedede;border-right:1px solid #dcdcdc"></div>
<div class="abs" style="left:90px;top:336px;width:1px;height:23px;background:#dcdcdc"></div>
<div class="abs" style="left:223px;top:336px;width:1px;height:23px;background:#dcdcdc"></div>
<div class="abs" style="left:450px;top:336px;width:1px;height:23px;background:#dcdcdc"></div>
<div class="abs" style="left:501px;top:336px;width:1px;height:23px;background:#dcdcdc"></div>
<div class="abs" style="left:594px;top:336px;width:1px;height:23px;background:#dcdcdc"></div>
<div class="abs" style="left:687px;top:336px;width:1px;height:23px;background:#dcdcdc"></div>
<div class="abs" style="left:780px;top:336px;width:1px;height:23px;background:#dcdcdc"></div>
<div class="abs" style="left:860px;top:336px;width:1px;height:23px;background:#dcdcdc"></div>
<div class="abs" style="left:933px;top:336px;width:1px;height:23px;background:#dcdcdc"></div>
<div class="abs" style="left:1013px;top:336px;width:1px;height:23px;background:#dcdcdc"></div>
<div class="t" style="left:93px;top:341px;font-size:12.5px;color:#2c78d4;letter-spacing:0px">0.840-045.0</div>
<div class="t" style="left:228px;top:341px;font-size:12px;letter-spacing:-0.121px;color:#2a1be0">CHARIOT 20" IGLOSS BURNISHER</div>
<div class="t" style="left:453px;top:341px;font-size:12px;color:#2a1be0">EA</div>
<div class="t" style="left:385px;top:341px;width:300px;text-align:right;font-size:12.5px;color:#2a1be0">$12,814.0500</div>
<div class="t" style="left:478px;top:341px;width:300px;text-align:right;font-size:12.5px;color:#2a1be0">$12,814.0500</div>
<div class="t" style="left:558px;top:341px;width:300px;text-align:right;font-size:12.5px;color:#2a1be0">1ea</div>
<div class="t" style="left:747px;top:341px;width:300px;text-align:center;font-size:12.5px;color:#2a1be0">8/17/18</div>
<div class="t" style="left:710px;top:341px;width:300px;text-align:right;font-size:12.5px;color:#2a1be0">1</div>
</div>
<div class="btn" style="left:5px;top:625px;width:100px;height:28px"><u>R</u>eport</div>
<div class="btn" style="left:113px;top:625px;width:100px;height:28px"><u>F</u>ind</div>
<div class="btn" style="left:867px;top:625px;width:128px;height:28px">Create <u>Q</u>uote</div>
<div class="btn" style="left:998px;top:625px;width:128px;height:28px">Create <u>O</u>rder</div>
<div class="btn" style="left:1129px;top:625px;width:100px;height:28px"><u>S</u>earch</div>
<div class="btn" style="left:1232px;top:625px;width:96px;height:28px">E<u>x</u>it</div>
<div class="abs" style="left:1125px;top:35px;width:181px;height:581px;border:1px solid #d3dee6"></div>
<div class="abs" style="left:1305px;top:35px;width:21px;height:581px;background:linear-gradient(90deg,#fafafa 0,#f0f0f0 42%,#dcdcdc 55%,#d0d0d2 80%,#c8c8ca 100%);border:1px solid #8a8a8a;border-radius:2px"></div>
<svg class="abs" style="left:1308px;top:43px" width="16" height="16" viewBox="0 0 16 16">
<defs><linearGradient id="eg2" x1="0" y1="0" x2="0" y2="1"><stop offset="0" stop-color="#f4fafd"/><stop offset="0.5" stop-color="#dcecf6"/><stop offset="1" stop-color="#c4e4f2"/></linearGradient></defs>
<circle cx="7.6" cy="7.4" r="6.9" fill="url(#eg2)" stroke="#6d9bd6" stroke-width="1.3"/>
<path d="M4.6 9.4L7.6 6.2l3 3.2" stroke="#0a0a5a" stroke-width="2.3" fill="none"/></svg>
<div class="t" style="left:1308px;top:67px;transform-origin:0 0;transform:translate(15px,0) rotate(90deg);font-size:13px;color:#101010">Options</div>
<div class="abs" style="left:1131px;top:58px;width:169px;height:162px;border:1px solid #d3dee6"></div>
<div class="abs" style="left:1136px;top:50px;width:62px;height:14px;background:#f7f7f7"></div>
<div class="t" style="left:1138px;top:49px;color:#101010">Group By</div>
<div class="radio" style="left:1144px;top:84px"></div>
<div class="t" style="left:1158px;top:83px;color:#101010">Product</div>
<div class="radio on" style="left:1144px;top:111px"></div>
<div class="t" style="left:1158px;top:110px;color:#101010">Product Line</div>
<div class="radio" style="left:1144px;top:138px"></div>
<div class="t" style="left:1158px;top:137px;color:#101010">Primary Vendor</div>
<div class="radio" style="left:1144px;top:165px"></div>
<div class="t" style="left:1158px;top:164px;color:#101010">24 Month#Hits</div>
<div class="radio" style="left:1144px;top:192px"></div>
<div class="t" style="left:1158px;top:191px;color:#101010">Line Seq #</div>
<div class="abs" style="left:1127px;top:244px;width:177px;height:370px;border:1px solid #d3dee6"></div>
<div class="abs" style="left:1132px;top:236px;width:42px;height:14px;background:#f7f7f7"></div>
<div class="t" style="left:1134px;top:235px;color:#101010">Filter</div>
<div class="radio on" style="left:1140px;top:270px"></div>
<div class="t" style="left:1154px;top:269px;color:#101010">Show All</div>
<div class="radio" style="left:1140px;top:297px"></div>
<div class="t" style="left:1154px;top:296px;color:#e81010">Due To Buy</div>
<div class="radio" style="left:1140px;top:324px"></div>
<div class="t" style="left:1154px;top:323px;color:#2ec52e">Quoted</div>
<div class="radio" style="left:1140px;top:351px"></div>
<div class="t" style="left:1154px;top:350px;color:#2020e8">History</div>
<div class="radio" style="left:1140px;top:378px"></div>
<div class="t" style="left:1154px;top:377px;color:#101010">Hidden</div>
<div class="t" style="left:1136px;top:454px;color:#101010">Hits:</div>
<div class="abs" style="left:1181px;top:449px;width:64px;height:26px;background:#f8f8f8;border:1px solid #cdd9e2"></div>
<div class="t" style="left:923px;top:455px;width:300px;text-align:right;color:#101010">4</div>
<div class="abs" style="left:1227px;top:450px;width:17px;height:12px;background:#f0f0f0;border:1px solid #a8a8a8"></div>
<div class="abs" style="left:1227px;top:462px;width:17px;height:12px;background:#f0f0f0;border:1px solid #a8a8a8"></div>
<svg class="abs" style="left:1232px;top:454px" width="7" height="4" viewBox="0 0 7 4"><path d="M0 4L3.5 0.5 7 4z" fill="#555"/></svg>
<svg class="abs" style="left:1232px;top:466px" width="7" height="4" viewBox="0 0 7 4"><path d="M0 0L3.5 3.5 7 0z" fill="#555"/></svg>
<div class="abs" style="left:1135px;top:495px;width:147px;height:81px;border:1px solid #d3dee6"></div>
<div class="abs" style="left:1140px;top:487px;width:50px;height:14px;background:#f7f7f7"></div>
<div class="t" style="left:1142px;top:485px;color:#101010">History</div>
<div class="t" style="left:1171px;top:510px;color:#101010">Cut Off Date</div>
<div class="abs" style="left:1142px;top:531px;width:129px;height:26px;background:#fff;border:1px solid #cdd9e2"></div>
<div class="t" style="left:1147px;top:537px;color:#101010">10/24/2016</div>
<svg class="abs" style="left:1257px;top:538px" width="9" height="9" viewBox="0 0 9 9"><path d="M0 0L4.5 4.4L9 0V4.5L4.5 9L0 4.5Z" fill="#777777"/></svg>
</body></html>
